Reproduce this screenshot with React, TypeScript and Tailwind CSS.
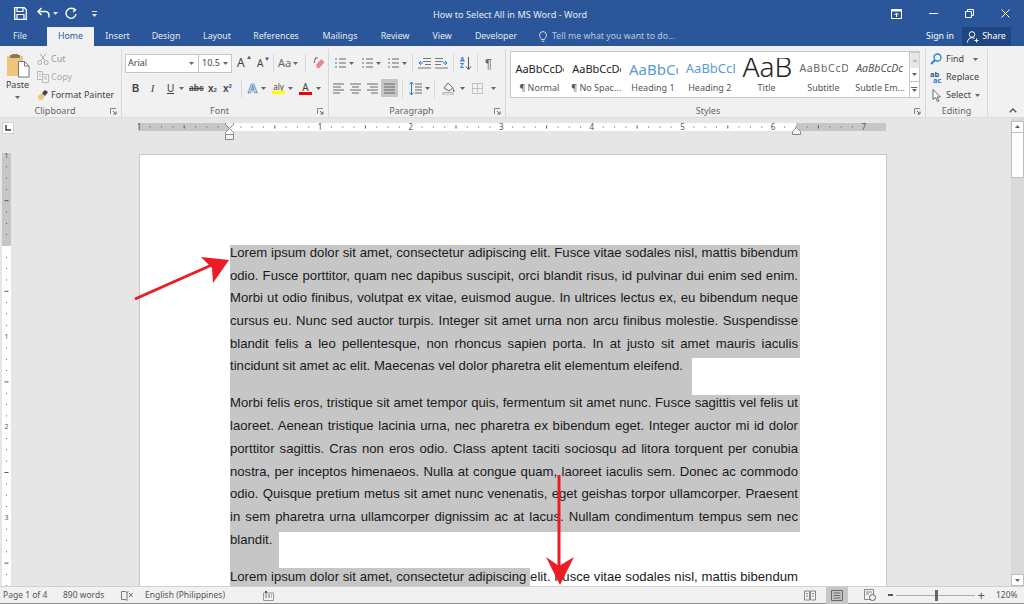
import { ReactNode } from "react";

const ui = "font-['Noto_Sans',sans-serif]";

const tabs = [
  { label: "Insert", cls: "w-[47px]" },
  { label: "Design", cls: "w-[50px]" },
  { label: "Layout", cls: "w-[52px]" },
  { label: "References", cls: "w-[66px]" },
  { label: "Mailings", cls: "w-[62px]" },
  { label: "Review", cls: "w-[48px]" },
  { label: "View", cls: "w-[46px]" },
  { label: "Developer", cls: "w-[62px]" },
];

const styleItems = [
  { sample: "AaBbCcDc", name: "¶ Normal", cls: "text-[11px] text-[#222]" },
  { sample: "AaBbCcDc", name: "¶ No Spac...", cls: "text-[11px] text-[#222]" },
  { sample: "AaBbCc", name: "Heading 1", cls: "text-[15px] text-[#5b9bd5]" },
  { sample: "AaBbCcD", name: "Heading 2", cls: "text-[13px] text-[#5b9bd5]" },
  { sample: "AaB", name: "Title", cls: "text-[28px] font-light text-[#222] leading-[22px] pb-[7px]" },
  { sample: "AaBbCcD", name: "Subtitle", cls: "text-[10.5px] tracking-[0.7px] text-[#666]" },
  { sample: "AaBbCcDc", name: "Subtle Em...", cls: "text-[10.5px] italic text-[#555]" },
];

function Caret({ color = "#666" }: { color?: string }) {
  return (
    <svg width="5" height="3" viewBox="0 0 5 3" className="shrink-0">
      <path d="M0 0h5L2.5 3z" fill={color} />
    </svg>
  );
}

function Launcher() {
  return (
    <svg width="7" height="7" viewBox="0 0 7 7" className="shrink-0">
      <path d="M.5 6V.5H6" fill="none" stroke="#888" />
      <path d="M3 3l3 3M6 3.5V6H3.5" fill="none" stroke="#666" />
    </svg>
  );
}

function Lines({ kind }: { kind: "left" | "center" | "right" | "justify" }) {
  const rows = {
    left: ["M0 1h11", "M0 4h8", "M0 7h11", "M0 10h7"],
    center: ["M0 1h11", "M2 4h7", "M0 7h11", "M2 10h7"],
    right: ["M0 1h11", "M3 4h8", "M0 7h11", "M4 10h7"],
    justify: ["M0 1h11", "M0 4h11", "M0 7h11", "M0 10h11"],
  }[kind];
  return (
    <svg width="11" height="11" viewBox="0 0 11 11">
      {rows.map((d) => (
        <path key={d} d={d} stroke="#666" strokeWidth="1" />
      ))}
    </svg>
  );
}

function GroupLabel({ children }: { children: ReactNode }) {
  return <div className="text-[9px] leading-[12px] text-[#666] text-center">{children}</div>;
}

function Separator() {
  return <div className="w-px h-[19px] bg-[#d8d8d8] shrink-0" />;
}

function TitleBar() {
  return (
    <div className="h-[27px] flex items-center text-white relative">
      <div className="w-[14px]" />
      <svg width="13" height="13" viewBox="0 0 13 13">
        <path d="M.7.7h9.6l2 2v9.6H.7z" fill="none" stroke="#fff" strokeWidth="1.3" />
        <path d="M3 1v3.5h6V1M3 12V7.5h7V12" fill="none" stroke="#fff" strokeWidth="1.2" />
      </svg>
      <div className="w-[10px]" />
      <svg width="14" height="13" viewBox="0 0 14 13">
        <path d="M4.5 1L1 4.5 4.5 8M1.5 4.5h7a4 4 0 0 1 3.5 4v2" fill="none" stroke="#fff" strokeWidth="1.4" />
      </svg>
      <div className="ml-[2px]"><Caret color="#dfe6f2" /></div>
      <div className="w-[7px]" />
      <svg width="12" height="13" viewBox="0 0 12 13">
        <path d="M8 1.2l2.5 1.6L8.2 5M9.8 3A5 5 0 1 0 11 7" fill="none" stroke="#fff" strokeWidth="1.4" />
      </svg>
      <div className="ml-[15px] flex flex-col items-center gap-[2px]">
        <div className="w-[5px] h-px bg-[#dfe6f2]" />
        <Caret color="#dfe6f2" />
      </div>
      <div className="w-[336px]" />
      <div className="text-[9.2px] pt-[2px] text-[#e3e9f4] whitespace-nowrap w-[154px] text-center">How to Select All in MS Word - Word</div>
      <div className="flex-1" />
      <div className="flex items-center">
        <svg width="11" height="10" viewBox="0 0 11 10">
          <path d="M.5.5h10v9H.5z" fill="none" stroke="#fff" />
          <path d="M.5.5h10v2H.5z" fill="#fff" />
          <path d="M5.5 8V4M3.5 6l2-2 2 2" fill="none" stroke="#fff" />
        </svg>
        <div className="w-[27px]" />
        <div className="w-[9px] h-px bg-white" />
        <div className="w-[27px]" />
        <svg width="9" height="9" viewBox="0 0 9 9">
          <path d="M.5 2.5h6v6h-6zM2.5 2.5v-2h6v6h-2" fill="none" stroke="#fff" />
        </svg>
        <div className="w-[27px]" />
        <svg width="9" height="9" viewBox="0 0 9 9">
          <path d="M.5.5l8 8M8.5.5l-8 8" stroke="#fff" fill="none" />
        </svg>
        <div className="w-[14px]" />
      </div>
    </div>
  );
}

function TabBar() {
  return (
    <div className="h-[19px] flex items-stretch text-[8.8px] text-[#e3e9f4]">
      <div className="w-[40px] pt-[1px] flex items-center justify-center">File</div>
      <div className="w-[7px]" />
      <div className="w-[47px] pt-[1px] bg-[#f1f1f1] text-[#2b579a] flex items-center justify-center">Home</div>
      {tabs.map((t) => (
        <div key={t.label} className={`${t.cls} pt-[1px] flex items-center justify-center`}>{t.label}</div>
      ))}
      <div className="ml-[12px] pt-[1px] flex items-center gap-[5px] text-[#b9c8e0]">
        <svg width="8" height="12" viewBox="0 0 8 12">
          <path d="M2.5 8.5C2 7 .6 6.300.6 4a3.400 3.400 0 0 1 6.800 0C7.400 6.300 6 7 5.500 8.500zM2.700 10.300h2.600" fill="none" stroke="#dbe3f0" strokeWidth=".9" />
        </svg>
        <span className="whitespace-nowrap">Tell me what you want to do...</span>
      </div>
      <div className="flex-1" />
      <div className="flex items-center pt-[1px] mr-[8px] text-white">Sign in</div>
      <div className="w-[49px] pt-[1px] bg-[#1f4680] text-white flex items-center justify-center gap-[3px] mr-[13px]">
        <svg width="12" height="12" viewBox="0 0 12 12">
          <circle cx="5" cy="3.500" r="2.800" fill="none" stroke="#fff" />
          <path d="M.5 11.500c0-3 2-4.800 4.500-4.800 1 0 1.800.3 2.500.8M9.500 7.500v4M7.500 9.500h4" fill="none" stroke="#fff" />
        </svg>
        Share
      </div>
    </div>
  );
}

function ClipboardGroup() {
  return (
    <div className="w-[122px] border-r border-[#d8d8d8] mt-[3px] flex flex-col">
      <div className="flex-1 flex">
        <div className="w-[35px] flex flex-col items-center pt-[3px]">
          <svg width="24" height="26" viewBox="0 0 24 26">
            <path d="M1 4h16v20H1z" fill="#eec57a" />
            <path d="M6 2h6v1h2v3H4V3h2z" fill="#8a7a5c" />
            <path d="M12.500 9.500h6l4.500 4.500v11h-10.500z" fill="#fff" stroke="#777" />
            <path d="M18.500 9.500v4.500H23" fill="none" stroke="#777" />
          </svg>
          <div className="text-[9px] leading-[12px] text-[#444] mt-[1px]">Paste</div>
          <div className="mt-[5px]"><Caret /></div>
        </div>
        <div className="flex flex-col pl-[2px] pt-[1px] text-[9px] text-[#444]">
          <div className="h-[18px] flex items-center gap-[2px] text-[#999]">
            <svg width="12" height="12" viewBox="0 0 12 12">
              <path d="M3 .5l5 7M9 .5l-5 7" stroke="#aaa" fill="none" />
              <circle cx="2.800" cy="9.500" r="2" fill="none" stroke="#aaa" />
              <circle cx="9.200" cy="9.500" r="2" fill="none" stroke="#aaa" />
            </svg>
            Cut
          </div>
          <div className="h-[18px] flex items-center gap-[2px] text-[#aaa]">
            <svg width="12" height="12" viewBox="0 0 12 12">
              <path d="M.5.500h5v8h-5zM5.500 3.500h6v8h-6z" fill="#f1f1f1" stroke="#bbb" />
              <path d="M2 3h2M2 5h2M7 6h3M7 8h3" stroke="#bbb" />
            </svg>
            Copy
          </div>
          <div className="h-[18px] flex items-center gap-[2px] whitespace-nowrap">
            <svg width="12" height="12" viewBox="0 0 12 12">
              <path d="M1 7l4-3 3 3-3 4H2z" fill="#eec57a" />
              <path d="M5 4l3-3 3 2-3 4z" fill="#444" />
            </svg>
            Format Painter
          </div>
        </div>
      </div>
      <div className="flex items-center pr-[4px]">
        <div className="flex-1"><GroupLabel>Clipboard</GroupLabel></div>
        <Launcher />
      </div>
    </div>
  );
}

function FontGroup() {
  return (
    <div className="w-[207px] border-r border-[#d8d8d8] mt-[3px] flex flex-col">
      <div className="flex-1 pl-[3px]">
        <div className="flex items-center h-[20px] mt-[4px] text-[#444]">
          <div className="w-[74px] h-[19px] bg-white border border-[#c6c6c6] flex items-center justify-between px-[2px] text-[9px]">
            <span>Arial</span>
            <span className="mr-[2px]"><Caret /></span>
          </div>
          <div className="w-[33px] h-[19px] bg-white border border-[#c6c6c6] border-l-0 flex items-center justify-between px-[3px] text-[9px]">
            <span>10.5</span>
            <Caret />
          </div>
          <span className="ml-[5px] text-[12px] w-[17px] relative">A<span className="absolute left-[9px] -top-[1px] text-[6px] text-[#555]">▲</span></span>
          <span className="text-[10px] w-[19px] pl-[3px] relative">A<span className="absolute left-[10px] -top-[1px] text-[6px] text-[#2b579a]">▼</span></span>
          <Separator />
          <span className="ml-[4px] text-[11px] text-[#666]">Aa</span>
          <span className="ml-[2px]"><Caret /></span>
          <div className="w-[7px]" />
          <Separator />
          <svg width="13" height="13" viewBox="0 0 13 13" className="ml-[6px]">
            <path d="M4 8l5-6 3.500 3-5 6H5z" fill="#e58a8a" />
            <path d="M3 1h3M3.500 1L2 6" stroke="#666" fill="none" />
          </svg>
        </div>
        <div className="flex items-center h-[20px] mt-[5px] text-[#444] text-[10px]">
          <span className="w-[11px] ml-[5px] text-center font-['Liberation_Sans',sans-serif] font-bold">B</span>
          <span className="w-[11px] ml-[6px] text-center font-['Liberation_Serif',serif] italic text-[11px]">I</span>
          <span className="w-[11px] ml-[7px] text-center font-['Liberation_Sans',sans-serif] underline">U</span>
          <span className="ml-[3px]"><Caret /></span>
          <span className="ml-[5px] w-[16px] text-[8.5px] font-bold line-through font-['Liberation_Sans',sans-serif]">abc</span>
          <span className="ml-[3px] w-[15px] font-bold font-['Liberation_Sans',sans-serif]">x<span className="text-[6px] text-[#2b579a]">2</span></span>
          <span className="w-[14px] font-bold font-['Liberation_Sans',sans-serif]">x<span className="text-[6px] align-super text-[#2b579a]">2</span></span>
          <div className="w-[4px]" />
          <Separator />
          <span className="ml-[6px] text-[13px] leading-none font-bold text-[#dbe8f7] [-webkit-text-stroke:0.7px_#2e74b5]">A</span>
          <span className="ml-[4px]"><Caret /></span>
          <div className="ml-[6px] w-[13px] flex flex-col items-center">
            <span className="text-[8px] leading-[9px]">aly</span>
            <div className="w-[13px] h-[3px] bg-[#ffff00]" />
          </div>
          <span className="ml-[3px]"><Caret /></span>
          <div className="ml-[6px] w-[13px] flex flex-col items-center">
            <span className="text-[10px] leading-[10px]">A</span>
            <div className="w-[13px] h-[3px] bg-[#f00000]" />
          </div>
          <span className="ml-[4px]"><Caret /></span>
        </div>
      </div>
      <div className="flex items-center pr-[4px]">
        <div className="flex-1"><GroupLabel>Font</GroupLabel></div>
        <Launcher />
      </div>
    </div>
  );
}

function ListIcon({ color }: { color: string }) {
  return (
    <svg width="12" height="12" viewBox="0 0 12 12">
      <path d="M1 1.500h2v1H1zM1 5.500h2v1H1zM1 9.500h2v1H1z" fill={color} />
      <path d="M5 2h7M5 6h7M5 10h7" stroke="#666" />
    </svg>
  );
}

function ParagraphGroup() {
  return (
    <div className="w-[177px] border-r border-[#d8d8d8] mt-[3px] flex flex-col">
      <div className="flex-1 pl-[5px]">
        <div className="flex items-center h-[20px] mt-[4px]">
          <ListIcon color="#2b7cd3" />
          <span className="ml-[3px]"><Caret /></span>
          <span className="ml-[7px]"><ListIcon color="#2b7cd3" /></span>
          <span className="ml-[3px]"><Caret /></span>
          <span className="ml-[6px]"><ListIcon color="#2b7cd3" /></span>
          <span className="ml-[3px]"><Caret /></span>
          <div className="w-[5px]" />
          <Separator />
          <svg width="13" height="11" viewBox="0 0 13 11" className="ml-[5px]">
            <path d="M5 .5h8M5 3.500h8M7 6.500h6M0 10h13" stroke="#777" />
            <path d="M5 5H1M3 3L1 5l2 2" stroke="#2b7cd3" fill="none" />
          </svg>
          <svg width="13" height="11" viewBox="0 0 13 11" className="ml-[4px]">
            <path d="M0 .5h8M0 3.500h8M0 6.500h6M0 10h13" stroke="#777" />
            <path d="M8 5h4M10 3l2 2-2 2" stroke="#2b7cd3" fill="none" />
          </svg>
          <div className="w-[5px]" />
          <Separator />
          <div className="ml-[6px] w-[14px] flex items-center">
            <div className="flex flex-col text-[6.500px] leading-[6.500px] text-[#2b7cd3] font-bold">
              <span>A</span>
              <span>Z</span>
            </div>
            <svg width="7" height="13" viewBox="0 0 7 13"><path d="M3.500 0v12M1 9.500l2.500 3 2.500-3" stroke="#555" fill="none" /></svg>
          </div>
          <div className="w-[3px]" />
          <Separator />
          <span className="ml-[7px] text-[13px] leading-none text-[#666] font-['Liberation_Sans',sans-serif]">¶</span>
        </div>
        <div className="flex items-center h-[20px] mt-[5px] -ml-[1px]">
          <Lines kind="left" />
          <span className="ml-[6px]"><Lines kind="center" /></span>
          <span className="ml-[6px]"><Lines kind="right" /></span>
          <div className="ml-[3px] w-[17px] h-[18px] bg-[#c6c6c6] flex items-center justify-center"><Lines kind="justify" /></div>
          <div className="w-[4px]" />
          <Separator />
          <svg width="13" height="13" viewBox="0 0 13 13" className="ml-[6px]">
            <path d="M2.500 0v13M.5 2.500L2.500 0l2 2.500M.5 10.500l2 2.500 2-2.500" stroke="#2b7cd3" fill="none" />
            <path d="M6 2h7M6 5h7M6 8h7M6 11h7" stroke="#666" />
          </svg>
          <span className="ml-[3px]"><Caret /></span>
          <div className="w-[4px]" />
          <Separator />
          <svg width="14" height="14" viewBox="0 0 14 14" className="ml-[7px]">
            <path d="M2 7l4-5 5 5-4 3z" fill="#f4f4f4" stroke="#666" />
            <path d="M11 7l2 3-2 1z" fill="#2b7cd3" />
            <path d="M1 11.500h10V14H1z" fill="#e8e8e8" stroke="#888" strokeWidth=".6" />
          </svg>
          <span className="ml-[4px]"><Caret /></span>
          <svg width="11" height="11" viewBox="0 0 11 11" className="ml-[7px]">
            <path d="M.5.500h10v10H.5zM5.500.500v10M.5 5.500h10" fill="none" stroke="#999" strokeDasharray="1 1" />
          </svg>
          <span className="ml-[8px]"><Caret /></span>
        </div>
      </div>
      <div className="flex items-center pr-[4px]">
        <div className="flex-1"><GroupLabel>Paragraph</GroupLabel></div>
        <Launcher />
      </div>
    </div>
  );
}

function StylesGroup() {
  return (
    <div className="w-[420px] border-r border-[#d8d8d8] mt-[3px] flex flex-col">
      <div className="flex-1 pl-[4px] pt-[2px]">
        <div className="w-[410px] h-[47px] flex border border-[#c6c6c6] bg-white">
          <div className="flex-1 flex">
            {styleItems.map((s) => (
              <div key={s.name} className="w-[56.8px] flex flex-col items-center pt-[6px]">
                <div className="w-[50px] h-[22px] flex items-center overflow-hidden pl-[1px]">
                  <span className={`${s.cls} whitespace-nowrap`}>{s.sample}</span>
                </div>
                <div className="text-[9px] mt-[1px] leading-[14px] text-[#555] whitespace-nowrap">{s.name}</div>
              </div>
            ))}
          </div>
          <div className="w-[12px] flex flex-col border-l border-[#c6c6c6] text-[#666]">
            <div className="h-[16px] bg-[#e6e6e6] flex items-center justify-center border-b border-[#c6c6c6] rotate-180"><Caret color="#bbb" /></div>
            <div className="h-[14px] flex items-center justify-center border-b border-[#c6c6c6]"><Caret /></div>
            <div className="flex-1 flex flex-col items-center justify-center gap-[1px]">
              <div className="w-[6px] h-px bg-[#666]" />
              <Caret />
            </div>
          </div>
        </div>
      </div>
      <div className="flex items-center pr-[4px]">
        <div className="w-[404px]"><GroupLabel>Styles</GroupLabel></div>
        <div className="flex-1" />
        <Launcher />
      </div>
    </div>
  );
}

function EditingGroup() {
  return (
    <div className="w-[62px] border-r border-[#d8d8d8] mt-[3px] flex flex-col">
      <div className="flex-1 flex flex-col pl-[4px] pt-[1px] text-[9px] text-[#444]">
        <div className="h-[18px] flex items-center gap-[4px]">
          <svg width="12" height="12" viewBox="0 0 12 12">
            <circle cx="7.500" cy="4.500" r="3.500" fill="none" stroke="#2b7cd3" strokeWidth="1.300" />
            <path d="M5 7l-4 4" stroke="#2b7cd3" strokeWidth="1.800" />
          </svg>
          Find
          <span className="ml-[5px]"><Caret /></span>
        </div>
        <div className="h-[18px] flex items-center gap-[3px]">
          <div className="w-[13px] flex flex-col text-[7.500px] leading-[6.500px] font-bold">
            <span className="text-[#2b579a]">ab</span>
            <span className="text-[#2b7cd3] pl-[3px]">ac</span>
          </div>
          Replace
        </div>
        <div className="h-[18px] flex items-center gap-[4px]">
          <svg width="12" height="13" viewBox="0 0 12 13">
            <path d="M3 .5v10l2.500-2 2 4 1.500-.7-2-3.800h3.500z" fill="#fff" stroke="#666" />
          </svg>
          Select
          <Caret />
        </div>
      </div>
      <GroupLabel>Editing</GroupLabel>
    </div>
  );
}

function Ribbon() {
  return (
    <div className="h-[72px] bg-[#f1f1f1] flex border-b border-[#dcdcdc]">
      <ClipboardGroup />
      <FontGroup />
      <ParagraphGroup />
      <StylesGroup />
      <EditingGroup />
      <div className="flex-1 flex items-end justify-end pb-[4px] pr-[7px]">
        <svg width="8" height="5" viewBox="0 0 8 5"><path d="M.7 4.300L4 1l3.300 3.300" fill="none" stroke="#555" strokeWidth="1.300" /></svg>
      </div>
    </div>
  );
}

function HorizontalRuler() {
  const inch = 90.6;
  const zero = 91.5;
  const ticks = [];
  for (let i = -8; i <= 56; i++) {
    const x = zero + (i * inch) / 8;
    if (x < 2 || x > 746 || i % 8 === 0) continue;
    ticks.push(
      i % 4 === 0 ? (
        <path key={i} d={`M${x} 2.500v3`} stroke="#555" />
      ) : (
        <path key={i} d={`M${x} 3.500v1`} stroke="#555" />
      )
    );
  }
  const labels = [-1, 1, 2, 3, 4, 5, 6, 7];
  return (
    <svg width="748" height="20" viewBox="0 0 748 20" className="block">
      <rect x="0" y="0" width="91" height="8" fill="#c6c6c6" />
      <rect x="91" y="0" width="567" height="8" fill="#fff" />
      <rect x="658" y="0" width="90" height="8" fill="#c6c6c6" />
      {ticks}
      {labels.map((n) => (
        <text key={n} x={zero + n * inch} y="7" fontSize="8" textAnchor="middle" fill="#555" fontFamily="Noto Sans">
          {Math.abs(n)}
        </text>
      ))}
      <path d="M87.500 -.5h8v2l-4 4-4-4z" fill="#f1f1f1" stroke="#888" />
      <path d="M91.500 5.500l4 4v2h-8v-2z" fill="#fff" stroke="#888" />
      <path d="M87.500 11.500h8v5h-8z" fill="#f1f1f1" stroke="#888" />
      <path d="M658.500 4.500l4 4v3h-8v-3z" fill="#f8f8f8" stroke="#888" />
    </svg>
  );
}

function VerticalRuler() {
  const inch = 90.6;
  const zero = 93;
  const ticks = [];
  for (let i = -7; i <= 30; i++) {
    const y = zero + (i * inch) / 8;
    if (y > 436 || i % 8 === 0) continue;
    ticks.push(
      i % 4 === 0 ? (
        <path key={i} d={`M2.500 ${y}h4`} stroke="#555" />
      ) : (
        <path key={i} d={`M4 ${y}h1`} stroke="#555" />
      )
    );
  }
  return (
    <svg width="9" height="433" viewBox="0 0 9 433" className="block">
      <rect x="0" y="0" width="9" height="93" fill="#c6c6c6" />
      <rect x="0" y="93" width="9" height="340" fill="#fff" />
      {ticks}
      <text x="4.500" y="5" fontSize="7" textAnchor="middle" fill="#555" fontFamily="Noto Sans">1</text>
      <text x="4.500" y="186" fontSize="7" textAnchor="middle" fill="#555" fontFamily="Noto Sans">1</text>
      <text x="4.500" y="276" fontSize="7" textAnchor="middle" fill="#555" fontFamily="Noto Sans">2</text>
      <text x="4.500" y="367" fontSize="7" textAnchor="middle" fill="#555" fontFamily="Noto Sans">3</text>
    </svg>
  );
}

function Line({ children }: { children: ReactNode }) {
  return <div className="h-[22.7px] leading-[16px] pr-[2px] bg-[#c6c6c6] text-justify [text-align-last:justify] whitespace-nowrap">{children}</div>;
}

function Page() {
  return (
    <div className="w-[748px] mt-[20px] h-[600px] bg-white border border-[#c6c6c6] pl-[90px] pt-[90px] font-['Liberation_Sans',sans-serif] text-[13.15px] text-[#1a1a1a]">
      <div className="w-[570px]">
        <Line>Lorem ipsum dolor sit amet, consectetur adipiscing elit. Fusce vitae sodales nisl, mattis bibendum</Line>
        <Line>odio. Fusce porttitor, quam nec dapibus suscipit, orci blandit risus, id pulvinar dui enim sed enim.</Line>
        <Line>Morbi ut odio finibus, volutpat ex vitae, euismod augue. In ultrices lectus ex, eu bibendum neque</Line>
        <Line>cursus eu. Nunc sed auctor turpis. Integer sit amet urna non arcu finibus molestie. Suspendisse</Line>
        <Line>blandit felis a leo pellentesque, non rhoncus sapien porta. In at justo sit amet mauris iaculis</Line>
        <div className="w-[462px] h-[37px] leading-[16px] bg-[#c6c6c6] whitespace-nowrap">tincidunt sit amet ac elit. Maecenas vel dolor pharetra elit elementum eleifend.</div>
        <Line>Morbi felis eros, tristique sit amet tempor quis, fermentum sit amet nunc. Fusce sagittis vel felis ut</Line>
        <Line>laoreet. Aenean tristique lacinia urna, nec pharetra ex bibendum eget. Integer auctor mi id dolor</Line>
        <Line>porttitor sagittis. Cras non eros odio. Class aptent taciti sociosqu ad litora torquent per conubia</Line>
        <Line>nostra, per inceptos himenaeos. Nulla at congue quam, laoreet iaculis sem. Donec ac commodo</Line>
        <Line>odio. Quisque pretium metus sit amet nunc venenatis, eget geishas torpor ullamcorper. Praesent</Line>
        <Line>in sem pharetra urna ullamcorper dignissim ac at lacus. Nullam condimentum tempus sem nec</Line>
        <div className="w-[49px] h-[37px] leading-[16px] bg-[#c6c6c6] whitespace-nowrap">blandit.</div>
        <div className="h-[22.7px] leading-[16px] pr-[2px] text-justify [text-align-last:justify] whitespace-nowrap">
          <span className="bg-[#c6c6c6] pt-[1px] pb-[10px]">Lorem ipsum dolor sit amet, consectetur adipiscing </span>elit. Fusce vitae sodales nisl, mattis bibendum
        </div>
      </div>
    </div>
  );
}

function Scrollbar() {
  return (
    <div className="w-[13px] bg-[#dadada] pt-[3px] flex flex-col shrink-0">
      <div className="h-[12px] bg-white border border-[#bdbdbd] flex items-center justify-center rotate-180"><Caret /></div>
      <div className="h-[45px] bg-white border border-t-0 border-[#bdbdbd]" />
      <div className="flex-1" />
      <div className="h-[12px] bg-white border border-[#bdbdbd] flex items-center justify-center"><Caret /></div>
    </div>
  );
}

function StatusBar() {
  return (
    <div className="relative h-[18px] bg-[#f1f1f1] border-t border-[#d0d0d0] border-b border-b-[#8e8e8e] flex items-center text-[8.5px] text-[#555] whitespace-nowrap">
      <span className="ml-[3px] w-[60px]">Page 1 of 4</span>
      <span className="w-[58px]">890 words</span>
      <svg width="12" height="11" viewBox="0 0 12 11">
        <path d="M.5 1.500h4l1.500 1v8l-1.500-1h-4zM6 2.500l1.500-1" fill="none" stroke="#777" />
        <path d="M8 3l3.500 4M11.500 3L8 7" stroke="#666" />
      </svg>
      <span className="ml-[12px] w-[118px]">English (Philippines)</span>
      <svg width="11" height="11" viewBox="0 0 11 11">
        <path d="M.5 3h10v7.500H.5z" fill="none" stroke="#999" />
        <path d="M2 1h2v2H2z" fill="#555" />
        <path d="M2 5h2M5 5h2M8 5h1M2 7h2M5 7h2M8 7h1" stroke="#777" />
      </svg>
      <div className="flex-1" />
      <svg width="12" height="11" viewBox="0 0 12 11">
        <path d="M.5 1h5v9h-5zM6.500 1h5v9h-5z" fill="none" stroke="#888" />
        <path d="M2 3.500h2M2 6h2M8 3.500h2M8 6h2" stroke="#888" />
      </svg>
      <div className="ml-[10px] w-[22px] h-[17px] bg-[#c6c6c6] flex items-center justify-center">
        <svg width="12" height="11" viewBox="0 0 12 11">
          <path d="M.5.5h11v10H.5z" fill="none" stroke="#666" />
          <path d="M2.500 3h7M2.500 5.500h7M2.500 8h7" stroke="#666" />
        </svg>
      </div>
      <svg width="12" height="12" viewBox="0 0 12 12" className="ml-[16px]">
        <path d="M.5.500h9v10h-9z" fill="none" stroke="#888" />
        <path d="M2 3h6M2 5h3" stroke="#888" />
        <circle cx="8.500" cy="8.500" r="3" fill="#f1f1f1" stroke="#666" />
      </svg>
      <div className="ml-[12px] w-[5px] h-[2px] bg-[#555]" />
      <div className="ml-[3px] w-[79px] h-px bg-[#aaa] flex items-center relative">
        <div className="absolute left-[39px] w-[3px] h-[11px] bg-[#666]" />
      </div>
      <span className="ml-[3px] text-[13px] leading-none text-[#555]">+</span>
      <span className="ml-[11px] mr-[7px] w-[21px]">120%</span>
    </div>
  );
}

export default function App() {
  return (
    <div className={`relative w-[1024px] h-[604px] overflow-hidden flex flex-col bg-[#e6e6e6] ${ui}`}>
      <div className="bg-[#2b579a]">
        <TitleBar />
        <TabBar />
      </div>
      <Ribbon />
      <div className="flex-1 min-h-0 flex">
        <div className="flex-1 min-w-0 flex flex-col">
          <div className="h-[16px] flex shrink-0">
            <div className="w-[138px] pl-[2px] pt-[4px]">
              <div className="w-[12px] h-[12px] bg-white border border-[#d0d0d0] flex items-center justify-center">
                <svg width="6" height="6" viewBox="0 0 6 6"><path d="M1 0v5h5" fill="none" stroke="#333" strokeWidth="1.400" /></svg>
              </div>
            </div>
            <div className="pt-[5px]"><HorizontalRuler /></div>
          </div>
          <div className="flex-1 min-h-0 flex overflow-hidden">
            <div className="w-[139px] pl-[2px] pt-[19px] shrink-0"><VerticalRuler /></div>
            <Page />
          </div>
        </div>
        <Scrollbar />
      </div>
      <StatusBar />
      <svg width="1024" height="604" viewBox="0 0 1024 604" className="absolute inset-0 pointer-events-none">
        <path d="M135 299L214 264" stroke="#ed1c24" strokeWidth="3" fill="none" />
        <path d="M201 257L229 260L213 283L212 268z" fill="#ed1c24" />
        <path d="M559 475V566" stroke="#ed1c24" strokeWidth="3" fill="none" />
        <path d="M546 557L559 566L574 557L560 585z" fill="#ed1c24" />
      </svg>
    </div>
  );
}
